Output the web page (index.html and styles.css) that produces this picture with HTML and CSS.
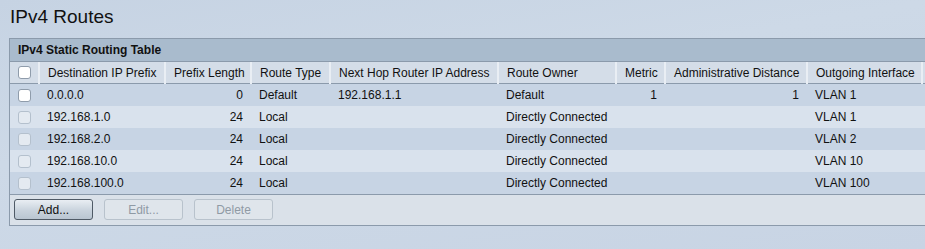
FILE: index.html
```html
<!DOCTYPE html>
<html lang="en">
<head>
    <meta charset="UTF-8">
    <title>IPv4 Routes</title>
    <link rel="stylesheet" href="styles.css">
</head>
<body>
    <h1 class="page-title">IPv4 Routes</h1>

    <div class="panel">
        <div class="panel-title">IPv4 Static Routing Table</div>
        <table class="routes">
            <colgroup>
                <col class="c-check">
                <col class="c-dest">
                <col class="c-len">
                <col class="c-type">
                <col class="c-hop">
                <col class="c-owner">
                <col class="c-metric">
                <col class="c-admin">
                <col class="c-out">
                <col class="c-rest">
            </colgroup>
            <thead>
                <tr>
                    <th><span class="check"></span></th>
                    <th>Destination IP Prefix</th>
                    <th>Prefix Length</th>
                    <th>Route Type</th>
                    <th>Next Hop Router IP Address</th>
                    <th>Route Owner</th>
                    <th>Metric</th>
                    <th>Administrative Distance</th>
                    <th>Outgoing Interface</th>
                    <th></th>
                </tr>
            </thead>
            <tbody>
                <tr>
                    <td><span class="check"></span></td>
                    <td>0.0.0.0</td>
                    <td class="num">0</td>
                    <td>Default</td>
                    <td>192.168.1.1</td>
                    <td>Default</td>
                    <td class="num">1</td>
                    <td class="num">1</td>
                    <td>VLAN 1</td>
                    <td></td>
                </tr>
                <tr>
                    <td><span class="check off"></span></td>
                    <td>192.168.1.0</td>
                    <td class="num">24</td>
                    <td>Local</td>
                    <td></td>
                    <td>Directly Connected</td>
                    <td></td>
                    <td></td>
                    <td>VLAN 1</td>
                    <td></td>
                </tr>
                <tr>
                    <td><span class="check off"></span></td>
                    <td>192.168.2.0</td>
                    <td class="num">24</td>
                    <td>Local</td>
                    <td></td>
                    <td>Directly Connected</td>
                    <td></td>
                    <td></td>
                    <td>VLAN 2</td>
                    <td></td>
                </tr>
                <tr>
                    <td><span class="check off"></span></td>
                    <td>192.168.10.0</td>
                    <td class="num">24</td>
                    <td>Local</td>
                    <td></td>
                    <td>Directly Connected</td>
                    <td></td>
                    <td></td>
                    <td>VLAN 10</td>
                    <td></td>
                </tr>
                <tr>
                    <td><span class="check off"></span></td>
                    <td>192.168.100.0</td>
                    <td class="num">24</td>
                    <td>Local</td>
                    <td></td>
                    <td>Directly Connected</td>
                    <td></td>
                    <td></td>
                    <td>VLAN 100</td>
                    <td></td>
                </tr>
            </tbody>
        </table>
        <div class="actions">
            <button class="btn">Add...</button>
            <button class="btn" disabled>Edit...</button>
            <button class="btn" disabled>Delete</button>
        </div>
    </div>
</body>
</html>
```

FILE: styles.css
```css
body {
    margin: 0;
    padding: 0 0 0 9px;
    overflow: hidden;
    font-family: "Liberation Sans", Arial, sans-serif;
    font-size: 12px;
    color: #111;
    background: linear-gradient(170deg, #c6d3e3 0%, #cdd9e7 40%, #c8d4e4 100%);
    height: 249px;
}
.page-title {
    margin: 0;
    padding: 6px 0 0 1px;
    height: 38px;
    box-sizing: border-box;
    font-size: 19px;
    font-weight: normal;
    color: #111;
}
.panel {
    border: 1px solid #8b9aab;
    border-right: none;
}
.panel-title {
    height: 22px;
    line-height: 22px;
    padding-left: 8px;
    background: #a9bbcd;
    font-weight: bold;
    border-bottom: 1px solid #8b9aab;
}
.routes {
    border-collapse: collapse;
    table-layout: fixed;
    width: 100%;
}
.c-check { width: 29px; }
.c-dest { width: 126px; }
.c-len { width: 86px; }
.c-type { width: 79px; }
.c-hop { width: 168px; }
.c-owner { width: 118px; }
.c-metric { width: 49px; }
.c-admin { width: 142px; }
.c-out { width: 115px; }
.routes th {
    height: 21px;
    padding: 0 8px;
    background: #d4dde8;
    font-weight: normal;
    text-align: left;
    white-space: nowrap;
    overflow: hidden;
    border-left: 2px solid #e9eef4;
    border-bottom: 1px solid #8b9aab;
}
.routes th:first-child { border-left: none; }
.routes td {
    height: 22px;
    padding: 0 8px;
    white-space: nowrap;
    overflow: hidden;
}
.routes tbody tr:nth-child(odd) td { background: #c7d4e4; }
.routes tbody tr:nth-child(even) td { background: #d9e2ed; }
.routes tbody tr:last-child td { border-bottom: 1px solid #8b9aab; }
.routes td.num { text-align: right; }
.routes th:first-child, .routes td:first-child { padding: 0 0 0 8px; }
.check {
    display: block;
    width: 11px;
    height: 11px;
    border: 1px solid #8f9cab;
    border-radius: 3px;
    background: #fff;
}
.check.off {
    border-color: #b4c0cd;
    background: #e4eaf1;
}
.actions {
    display: flex;
    gap: 11px;
    height: 30px;
    padding: 4px 0 0 4px;
    box-sizing: border-box;
    background: #dae1e9;
}
.btn {
    width: 79px;
    height: 21px;
    padding: 0;
    font-family: inherit;
    font-size: 12px;
    color: #111;
    border: 1px solid #4f5a66;
    border-radius: 3px;
    background: linear-gradient(#e9eef3, #c9d3dd 55%, #b9c5d1);
}
.btn:disabled {
    color: #8f9aa5;
    border-color: #b8c2cc;
    background: #dfe5eb;
}
```
